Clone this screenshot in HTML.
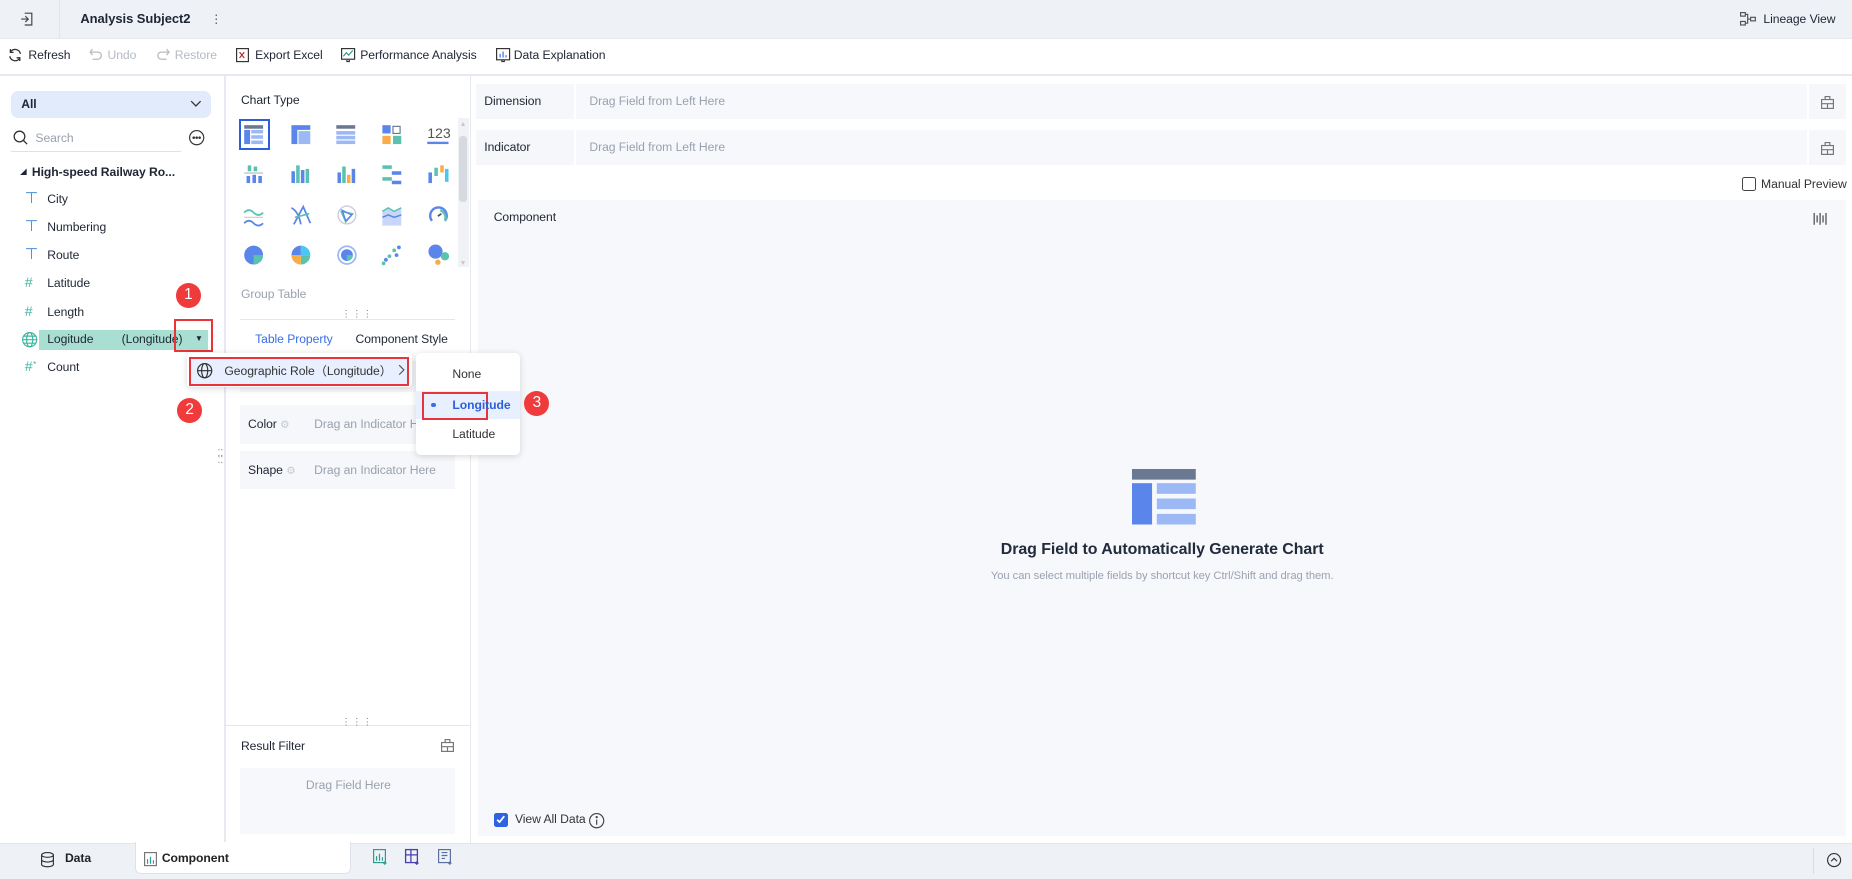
<!DOCTYPE html>
<html><head><meta charset="utf-8"><style>
html,body{margin:0;padding:0;}
body{width:1568px;height:744px;zoom:1.18112;position:relative;overflow:hidden;background:#fff;font-family:"Liberation Sans",sans-serif;font-size:10.3px;letter-spacing:-0.05px;color:#1f2633;}
.a{position:absolute;}
.t{position:absolute;white-space:nowrap;line-height:14px;}
.g{color:#9aa2b0;}
.box{position:absolute;background:#f5f7fa;}
svg{position:absolute;overflow:visible;}
.red{position:absolute;border:2px solid #e8343a;box-sizing:border-box;}
.circ{position:absolute;width:21px;height:21px;border-radius:50%;background:#ef3b3b;color:#fff;font-size:13px;text-align:center;line-height:21px;}
</style></head><body>
<div class="a" style="left:0;top:0;width:1568px;height:33px;background:#eef1f6;border-bottom:1px solid #e3e7ee;box-sizing:border-box"></div>
<div class="a" style="left:50px;top:0;width:1px;height:33px;background:#e1e5ec"></div>
<svg style="left:17px;top:10px" width="12" height="12" viewBox="0 0 12 12" fill="none" stroke="#444" stroke-width="1"><path d="M4 1h6v10H4M1 6h6M4.5 3.5L7 6 4.5 8.5"/></svg>
<div class="t" style="left:68px;top:9px;font-weight:bold;font-size:11px">Analysis Subject2</div>
<div class="t" style="left:178px;top:9px;color:#555">⋮</div>
<svg style="left:1473px;top:10px" width="14" height="12" viewBox="0 0 14 12" fill="none" stroke="#555" stroke-width="1"><rect x="0.5" y="0.5" width="4" height="3"/><rect x="0.5" y="8" width="4" height="3"/><path d="M4.5 2h2v7.5h-2M6.5 6h2"/><rect x="9" y="4.5" width="4" height="3"/></svg>
<div class="t" style="left:1493px;top:9px">Lineage View</div>
<div class="a" style="left:0;top:63px;width:1568px;height:1px;background:#e6e9ef"></div>
<svg style="left:7px;top:41px" width="12" height="12" viewBox="0 0 12 12" fill="none" stroke="#333" stroke-width="1.1"><path d="M10.5 5A4.6 4.6 0 0 0 2 3.5M1.5 7A4.6 4.6 0 0 0 10 8.5M2 1v2.7h2.7M10 11V8.3H7.3"/></svg>
<div class="t" style="left:24px;top:40px">Refresh</div>
<svg style="left:75px;top:41px" width="12" height="12" viewBox="0 0 12 12" fill="none" stroke="#bbb" stroke-width="1.1"><path d="M3 1L1 3.5 3 6M1 3.5h6.5a3 3 0 0 1 0 6H3"/></svg>
<div class="t g" style="left:91px;top:40px;color:#b5bac3">Undo</div>
<svg style="left:132px;top:41px" width="12" height="12" viewBox="0 0 12 12" fill="none" stroke="#bbb" stroke-width="1.1"><path d="M9 1l2 2.5L9 6M11 3.5H4.5a3 3 0 0 0 0 6H9"/></svg>
<div class="t g" style="left:148px;top:40px;color:#b5bac3">Restore</div>
<svg style="left:200px;top:41px" width="11" height="12" viewBox="0 0 11 12" fill="none" stroke="#333" stroke-width="1"><rect x="0.5" y="0.5" width="10" height="11"/><path d="M3 3.5l4 5M7 3.5l-4 5" stroke="#b03030"/></svg>
<div class="t" style="left:216px;top:40px">Export Excel</div>
<svg style="left:289px;top:41px" width="12" height="12" viewBox="0 0 12 12" fill="none" stroke="#333" stroke-width="1"><rect x="0.5" y="0.5" width="11" height="9"/><path d="M2 7l2.5-3 2 2 3.5-4" stroke="#2a9d8f"/><path d="M5 10v1.5h2V10"/></svg>
<div class="t" style="left:305px;top:40px">Performance Analysis</div>
<svg style="left:420px;top:41px" width="12" height="12" viewBox="0 0 12 12" fill="none" stroke="#333" stroke-width="1"><rect x="0.5" y="0.5" width="11" height="9.5"/><path d="M3.5 8V5M6 8V3M8.5 8V6" stroke="#3b6fe0"/><path d="M5 10v1.5h2V10"/></svg>
<div class="t" style="left:435px;top:40px">Data Explanation</div>
<div class="a" style="left:190px;top:64px;width:1px;height:650px;background:#e6e9ef"></div>
<div class="a" style="left:9px;top:77px;width:170px;height:23px;background:#e2ebfc;border-radius:6px"></div>
<div class="t" style="left:18px;top:81px;font-weight:bold">All</div>
<svg style="left:161px;top:85px" width="10" height="6" viewBox="0 0 10 6" fill="none" stroke="#333" stroke-width="1.1"><path d="M1 1l4 4 4-4"/></svg>
<svg style="left:11px;top:110px" width="13" height="13" viewBox="0 0 13 13" fill="none" stroke="#333" stroke-width="1.1"><circle cx="5.5" cy="5.5" r="4.5"/><path d="M9 9l3 3"/></svg>
<div class="t g" style="left:30px;top:110px">Search</div>
<div class="a" style="left:9px;top:128px;width:144px;height:1px;background:#dde1e8"></div>
<svg style="left:160px;top:110px" width="13" height="13" viewBox="0 0 13 13" fill="none" stroke="#333" stroke-width="1"><circle cx="6.5" cy="6.5" r="6"/><circle cx="4" cy="6.5" r=".6" fill="#333"/><circle cx="6.5" cy="6.5" r=".6" fill="#333"/><circle cx="9" cy="6.5" r=".6" fill="#333"/></svg>
<div class="t" style="left:17px;top:139px;font-size:7px">◢</div>
<div class="t" style="left:27px;top:139px;font-weight:bold">High-speed Railway Ro...</div>
<div class="t" style="left:21px;top:162px;color:#4c8fd8;font-size:13px">⊤</div><div class="t" style="left:40px;top:162px">City</div>
<div class="t" style="left:21px;top:185px;color:#4c8fd8;font-size:13px">⊤</div><div class="t" style="left:40px;top:185px">Numbering</div>
<div class="t" style="left:21px;top:209px;color:#4c8fd8;font-size:13px">⊤</div><div class="t" style="left:40px;top:209px">Route</div>
<div class="t" style="left:21px;top:233px;color:#3fb6a0;font-size:12px">#</div><div class="t" style="left:40px;top:233px">Latitude</div>
<div class="t" style="left:21px;top:257px;color:#3fb6a0;font-size:12px">#</div><div class="t" style="left:40px;top:257px">Length</div>
<div class="a" style="left:33px;top:279px;width:143px;height:17px;background:#a9dfd3"></div>
<svg style="left:19px;top:281px" width="13" height="13" viewBox="0 0 13 13" fill="none" stroke="#3fb6a0" stroke-width="1"><circle cx="6.5" cy="6.5" r="6"/><ellipse cx="6.5" cy="6.5" rx="2.6" ry="6"/><path d="M.5 6.5h12M1.5 3.5h10M1.5 9.5h10"/></svg>
<div class="t" style="left:40px;top:280px">Logitude</div>
<div class="t" style="left:103px;top:280px">(Longitude)</div>
<div class="t" style="left:165px;top:280px;font-size:7px">▼</div>
<div class="red" style="left:147px;top:270px;width:33px;height:28px"></div>
<div class="circ" style="left:149px;top:240px">1</div>
<div class="t" style="left:21px;top:304px;color:#3fb6a0;font-size:12px">#</div><div class="t" style="left:28px;top:302px;color:#3fb6a0;font-size:7px">*</div><div class="t" style="left:40px;top:304px">Count</div>
<div class="a" style="left:398px;top:64px;width:1px;height:650px;background:#e6e9ef"></div>
<div class="t" style="left:204px;top:78px">Chart Type</div>
<div class="a" style="left:202px;top:101px;width:27px;height:26px;border:2px solid #2b5fdb;box-sizing:border-box"></div>
<svg style="left:206px;top:105px" width="180" height="120" viewBox="0 0 180 120">
<g transform="translate(1,1)"><rect width="16" height="3" fill="#6b7892"/><rect y="4" width="5" height="12" fill="#5a86ec"/><rect x="6" y="4" width="10" height="3" fill="#9cb8f5"/><rect x="6" y="8.5" width="10" height="3" fill="#9cb8f5"/><rect x="6" y="13" width="10" height="3" fill="#9cb8f5"/></g>
<g transform="translate(41,1)"><rect width="16" height="4" fill="#5a86ec"/><rect y="4" width="5" height="12" fill="#5a86ec"/><rect x="6" y="5" width="10" height="11" fill="#9cb8f5"/></g>
<g transform="translate(79,1)"><rect width="16" height="3" fill="#6b7892"/><rect y="5" width="16" height="3" fill="#9cb8f5"/><rect y="9" width="16" height="3" fill="#9cb8f5"/><rect y="13" width="16" height="3" fill="#9cb8f5"/></g>
<g transform="translate(118,1)"><rect width="7" height="7" fill="#5a86ec"/><rect x="9" y="1" width="6" height="6" fill="none" stroke="#6b7892"/><rect y="9" width="7" height="7" fill="#f8ad46"/><rect x="9" y="9" width="7" height="7" fill="#5cc2b0"/></g>
<text x="156" y="12" font-size="12" fill="#555" font-family="Liberation Sans">123</text><rect x="156" y="15" width="18" height="2" fill="#5a86ec"/>
<g transform="translate(1,35)"><rect x="3" y="0" width="3" height="5" fill="#5cc2b0"/><rect x="8" y="1" width="3" height="4" fill="#5cc2b0"/><rect y="6" width="16" height="1" fill="#bbb"/><rect x="2" y="9" width="3" height="6" fill="#5a86ec"/><rect x="7" y="8" width="3" height="7" fill="#5a86ec"/><rect x="12" y="9" width="3" height="6" fill="#5a86ec"/></g>
<g transform="translate(41,35)"><rect x="0" y="5" width="3" height="10" fill="#5a86ec"/><rect x="4" y="0" width="3" height="15" fill="#5cc2b0"/><rect x="8" y="4" width="3" height="11" fill="#5a86ec"/><rect x="12" y="3" width="3" height="12" fill="#5cc2b0"/></g>
<g transform="translate(80,35)"><rect x="0" y="6" width="3" height="9" fill="#5a86ec"/><rect x="4" y="1" width="3" height="14" fill="#5cc2b0"/><rect x="8" y="8" width="3" height="7" fill="#f8ad46"/><rect x="12" y="3" width="3" height="12" fill="#5a86ec"/></g>
<g transform="translate(118,35)"><rect width="8" height="3" fill="#5cc2b0"/><rect x="8" y="5" width="8" height="3" fill="#5a86ec"/><rect y="10" width="8" height="3" fill="#5cc2b0"/><rect x="8" y="13" width="8" height="3" fill="#5a86ec"/></g>
<g transform="translate(157,35)"><rect x="0" y="6" width="3" height="9" fill="#5a86ec"/><rect x="5" y="2" width="3" height="7" fill="#5cc2b0"/><rect x="10" y="0" width="3" height="6" fill="#f8ad46"/><rect x="14" y="3" width="3" height="11" fill="#4bc6f0"/></g>
<g transform="translate(1,70)" fill="none" stroke-width="1.5"><path d="M0 5q4-4 8 0t8 0" stroke="#5cc2b0"/><path d="M0 9h16" stroke="#ccc" stroke-width="1"/><path d="M0 14q4-4 8 0t8 0" stroke="#5a86ec"/></g>
<g transform="translate(41,70)" fill="none" stroke-width="1.5"><path d="M0 1q6 3 8 14" stroke="#5a86ec"/><path d="M2 15L10 0l6 14" stroke="#5a86ec"/><path d="M3 9l12-3" stroke="#5cc2b0"/></g>
<g transform="translate(80,69)" fill="none" stroke-width="1.2"><circle cx="8" cy="8" r="7.5" stroke="#ccd"/><path d="M3 5l10 2-6 7z" stroke="#5cc2b0"/><path d="M4 4l8 4-5 5z" stroke="#5a86ec"/></g>
<g transform="translate(118,70)"><path d="M0 4l5-3 5 3 6-3v15H0z" fill="#c8d7f9"/><path d="M0 4l5-3 5 3 6-3" stroke="#5cc2b0" fill="none" stroke-width="1.3"/><path d="M0 9l5-2 5 2 6-2" stroke="#5a86ec" fill="none" stroke-width="1.3"/></g>
<g transform="translate(157,69)" fill="none" stroke-width="2"><path d="M3 13A7 7 0 1 1 14 13" stroke="#5a86ec"/><path d="M10 4A7 7 0 0 1 14 13" stroke="#5cc2b0"/><path d="M8 9l3-2" stroke="#555" stroke-width="1.5"/></g>
<g transform="translate(1,103)"><circle cx="8" cy="8" r="8" fill="#5a86ec"/><path d="M8 8h8a8 8 0 0 1-8 8z" fill="#5cc2b0"/></g>
<g transform="translate(41,103)"><path d="M8 8V0a8 8 0 0 1 8 8z" fill="#4bc6f0"/><path d="M8 8h8a8 8 0 0 1-8 8z" fill="#5cc2b0"/><path d="M8 8v8a8 8 0 0 1-8-8z" fill="#f8ad46"/><path d="M8 8H0a8 8 0 0 1 8-8z" fill="#5a86ec"/></g>
<g transform="translate(80,103)"><circle cx="8" cy="8" r="7.5" fill="none" stroke="#9cb8f5" stroke-width="1.5"/><circle cx="8" cy="8" r="5" fill="#5a86ec"/><path d="M8 8h5a5 5 0 0 1-5 5z" fill="#5cc2b0"/></g>
<g transform="translate(118,103)" fill="#5a86ec"><circle cx="14" cy="1.5" r="1.6"/><circle cx="10" cy="4" r="1.6" fill="#5cc2b0"/><circle cx="12" cy="8" r="1.6"/><circle cx="6" cy="9" r="1.6" fill="#5cc2b0"/><circle cx="3" cy="12" r="1.6"/><circle cx="1" cy="15" r="1.6" fill="#5cc2b0"/></g>
<g transform="translate(157,102)"><circle cx="6" cy="6" r="6" fill="#5a86ec"/><circle cx="14" cy="10" r="3.5" fill="#5cc2b0"/><circle cx="8" cy="15" r="2.3" fill="#f8ad46"/></g>
</svg>
<div class="a" style="left:388px;top:100px;width:9px;height:126px;background:#f1f2f5"></div>
<div class="a" style="left:389px;top:115px;width:6px;height:56px;background:#d6d9df;border-radius:3px"></div>
<div class="t" style="left:389px;top:98px;font-size:6px;color:#c7cad0">▲</div>
<div class="t" style="left:389px;top:216px;font-size:6px;color:#c7cad0">▼</div>
<div class="t g" style="left:204px;top:242px">Group Table</div>
<div class="a" style="left:203px;top:270px;width:182px;height:1px;background:#e3e6ec"></div>
<div class="t" style="left:289px;top:260px;font-size:8px;color:#777;letter-spacing:1px">⋮⋮⋮</div>
<div class="t" style="left:216px;top:280px;color:#3a6ee8">Table Property</div>
<div class="t" style="left:301px;top:280px">Component Style</div>
<div class="box" style="left:203px;top:306px;width:182px;height:26px"></div>
<div class="box" style="left:203px;top:343px;width:182px;height:33px"></div>
<div class="t" style="left:210px;top:352px">Color <span style="color:#c5c9d0;font-size:9px">⚙</span></div>
<div class="t g" style="left:266px;top:352px">Drag an Indicator Here</div>
<div class="box" style="left:203px;top:382px;width:182px;height:32px"></div>
<div class="t" style="left:210px;top:391px">Shape <span style="color:#c5c9d0;font-size:9px">⚙</span></div>
<div class="t g" style="left:266px;top:391px">Drag an Indicator Here</div>
<div class="t" style="left:184px;top:381px;font-size:8px;color:#888;line-height:6px">⁚⁚<br>⁚⁚</div>
<div class="a" style="left:190px;top:614px;width:208px;height:1px;background:#e3e6ec"></div>
<div class="t" style="left:289px;top:605px;font-size:8px;color:#777;letter-spacing:1px">⋮⋮⋮</div>
<div class="t" style="left:204px;top:625px">Result Filter</div>
<svg style="left:373px;top:626px" width="11" height="11" viewBox="0 0 11 11" fill="none" stroke="#777" stroke-width="1"><rect x="0.5" y="3" width="10" height="7.5"/><path d="M3.5 3V.5h4V3M.5 6.5h10M5.5 6.5v4"/></svg>
<div class="box" style="left:203px;top:650px;width:182px;height:56px;background:#f7f8fb"></div>
<div class="t g" style="left:259px;top:658px">Drag Field Here</div>
<div class="box" style="left:403px;top:71px;width:83px;height:30px"></div>
<div class="box" style="left:488px;top:71px;width:1042px;height:30px;background:#f7f8fb"></div>
<div class="box" style="left:1532px;top:71px;width:31px;height:30px"></div>
<div class="t" style="left:410px;top:79px">Dimension</div>
<div class="t g" style="left:499px;top:79px">Drag Field from Left Here</div>
<svg style="left:1542px;top:81px" width="11" height="11" viewBox="0 0 11 11" fill="none" stroke="#777" stroke-width="1"><rect x="0.5" y="3" width="10" height="7.5"/><path d="M3.5 3V.5h4V3M.5 6.5h10M5.5 6.5v4"/></svg>
<div class="box" style="left:403px;top:110px;width:83px;height:30px"></div>
<div class="box" style="left:488px;top:110px;width:1042px;height:30px;background:#f7f8fb"></div>
<div class="box" style="left:1532px;top:110px;width:31px;height:30px"></div>
<div class="t" style="left:410px;top:118px">Indicator</div>
<div class="t g" style="left:499px;top:118px">Drag Field from Left Here</div>
<svg style="left:1542px;top:120px" width="11" height="11" viewBox="0 0 11 11" fill="none" stroke="#777" stroke-width="1"><rect x="0.5" y="3" width="10" height="7.5"/><path d="M3.5 3V.5h4V3M.5 6.5h10M5.5 6.5v4"/></svg>
<div class="a" style="left:1475px;top:150px;width:12px;height:12px;border:1px solid #444;border-radius:2px;box-sizing:border-box"></div>
<div class="t" style="left:1491px;top:149px;color:#333">Manual Preview</div>
<div class="box" style="left:405px;top:169px;width:1158px;height:539px;background:#f7f8fb"></div>
<div class="t" style="left:418px;top:177px">Component</div>
<svg style="left:1535px;top:180px" width="12" height="10" viewBox="0 0 12 10" stroke="#444" stroke-width="1"><path d="M1 0v10M3.5 2v6M6 0v10M8.5 2v6M11 0v10"/></svg>
<svg style="left:958px;top:397px" width="54" height="47" viewBox="0 0 54 47"><rect width="54" height="9" fill="#6b7892"/><rect y="12" width="17" height="35" fill="#5a86ec"/><rect x="21" y="12" width="33" height="9" fill="#9cb8f5"/><rect x="21" y="25" width="33" height="9" fill="#9cb8f5"/><rect x="21" y="38" width="33" height="9" fill="#9cb8f5"/></svg>
<div class="t" style="left:784px;top:457px;width:400px;text-align:center;font-size:13.5px;font-weight:bold;color:#222b3c;line-height:17px">Drag Field to Automatically Generate Chart</div>
<div class="t" style="left:784px;top:481px;width:400px;text-align:center;font-size:9.5px;color:#9aa2b0">You can select multiple fields by shortcut key Ctrl/Shift and drag them.</div>
<div class="a" style="left:418px;top:688px;width:12px;height:12px;background:#2f62e0;border-radius:2px"></div>
<svg style="left:420px;top:690px" width="8" height="8" viewBox="0 0 8 8" fill="none" stroke="#fff" stroke-width="1.5"><path d="M1 4l2 2 4-5"/></svg>
<div class="t" style="left:436px;top:687px;color:#333;width:60px">View All Data</div>
<svg style="left:499px;top:688px" width="13" height="13" viewBox="0 0 13 13" fill="none" stroke="#444" stroke-width="1"><circle cx="6.5" cy="6.5" r="6"/><path d="M6.5 5.5v4.5"/><circle cx="6.5" cy="3.5" r=".5" fill="#444"/></svg>
<div class="a" style="left:0;top:714px;width:1568px;height:30px;background:#eef1f6;border-top:1px solid #e1e5ec;box-sizing:border-box"></div>
<svg style="left:35px;top:721px" width="11" height="13" viewBox="0 0 11 13" fill="none" stroke="#333" stroke-width="1"><ellipse cx="5.5" cy="2.5" rx="5" ry="2"/><path d="M.5 2.5v8c0 1.1 2.2 2 5 2s5-.9 5-2v-8M.5 6.5c0 1.1 2.2 2 5 2s5-.9 5-2"/></svg>
<div class="t" style="left:55px;top:720px;font-weight:bold;color:#222">Data</div>
<div class="a" style="left:114px;top:713px;width:183px;height:27px;background:#fff;border:1px solid #dde1e8;border-top:none;border-radius:0 0 5px 5px;box-sizing:border-box"></div>
<svg style="left:122px;top:721px" width="11" height="12" viewBox="0 0 11 12" fill="none" stroke="#777" stroke-width="1"><rect x="0.5" y="0.5" width="10" height="11"/><path d="M3 10V6M5.5 10V4M8 10V7" stroke="#2a9d8f"/></svg>
<div class="t" style="left:137px;top:720px;font-weight:bold;color:#222">Component</div>
<svg style="left:316px;top:719px" width="13" height="14" viewBox="0 0 13 14" fill="none" stroke="#2a9d8f" stroke-width="1"><rect x="0.5" y="0.5" width="10" height="11"/><path d="M3 10V6M5.5 10V4M8 10V7M10 10.5v3M8.5 12h3"/></svg>
<svg style="left:343px;top:719px" width="13" height="14" viewBox="0 0 13 14" fill="none" stroke="#4b3fb0" stroke-width="1.1"><rect x="0.5" y="0.5" width="10" height="11"/><path d="M0.5 5h10M5 .5v11M10 10.5v3M8.5 12h3"/></svg>
<svg style="left:371px;top:719px" width="13" height="14" viewBox="0 0 13 14" fill="none" stroke="#5a6ea0" stroke-width="1"><rect x="0.5" y="0.5" width="10" height="11"/><path d="M3 3h5M3 5.5h5M3 8h3M10 10.5v3M8.5 12h3"/></svg>
<div class="a" style="left:1535px;top:718px;width:1px;height:22px;background:#d8dce3"></div>
<svg style="left:1547px;top:722px" width="12" height="12" viewBox="0 0 12 12" fill="none" stroke="#333" stroke-width="1"><circle cx="6" cy="6" r="5.5"/><path d="M3.5 7L6 4.5 8.5 7"/></svg>
<div class="a" style="left:158px;top:299px;width:191px;height:29px;background:#fff;border-radius:3px;box-shadow:0 1px 6px rgba(0,0,0,.15)"></div>
<div class="a" style="left:160px;top:302px;width:186px;height:24px;background:#e8efff"></div>
<div class="red" style="left:160px;top:302px;width:186px;height:25px"></div>
<svg style="left:167px;top:307px" width="13" height="13" viewBox="0 0 13 13" fill="none" stroke="#333" stroke-width="1"><circle cx="6.5" cy="6.5" r="6"/><ellipse cx="6.5" cy="6.5" rx="2.6" ry="6"/><path d="M.5 6.5h12"/></svg>
<div class="t" style="left:190px;top:307px;color:#333;font-family:'Liberation Sans','Noto Sans CJK SC',sans-serif">Geographic Role（Longitude）</div>
<svg style="left:337px;top:308px" width="6" height="10" viewBox="0 0 6 10" fill="none" stroke="#555" stroke-width="1"><path d="M1 1l4 4-4 4"/></svg>
<div class="circ" style="left:150px;top:337px">2</div>
<div class="a" style="left:352px;top:299px;width:88px;height:86px;background:#fff;border-radius:4px;box-shadow:0 1px 6px rgba(0,0,0,.15)"></div>
<div class="t" style="left:383px;top:310px;color:#333">None</div>
<div class="a" style="left:352px;top:331px;width:88px;height:24px;background:#e8efff"></div>
<div class="red" style="left:357px;top:332px;width:56px;height:24px"></div>
<div class="a" style="left:365px;top:341px;width:4px;height:4px;border-radius:50%;background:#3a6ee8"></div>
<div class="t" style="left:383px;top:336px;color:#2d5fd8;font-weight:bold">Longitude</div>
<div class="t" style="left:383px;top:361px;color:#333">Latitude</div>
<div class="circ" style="left:444px;top:331px">3</div>
</body></html>
